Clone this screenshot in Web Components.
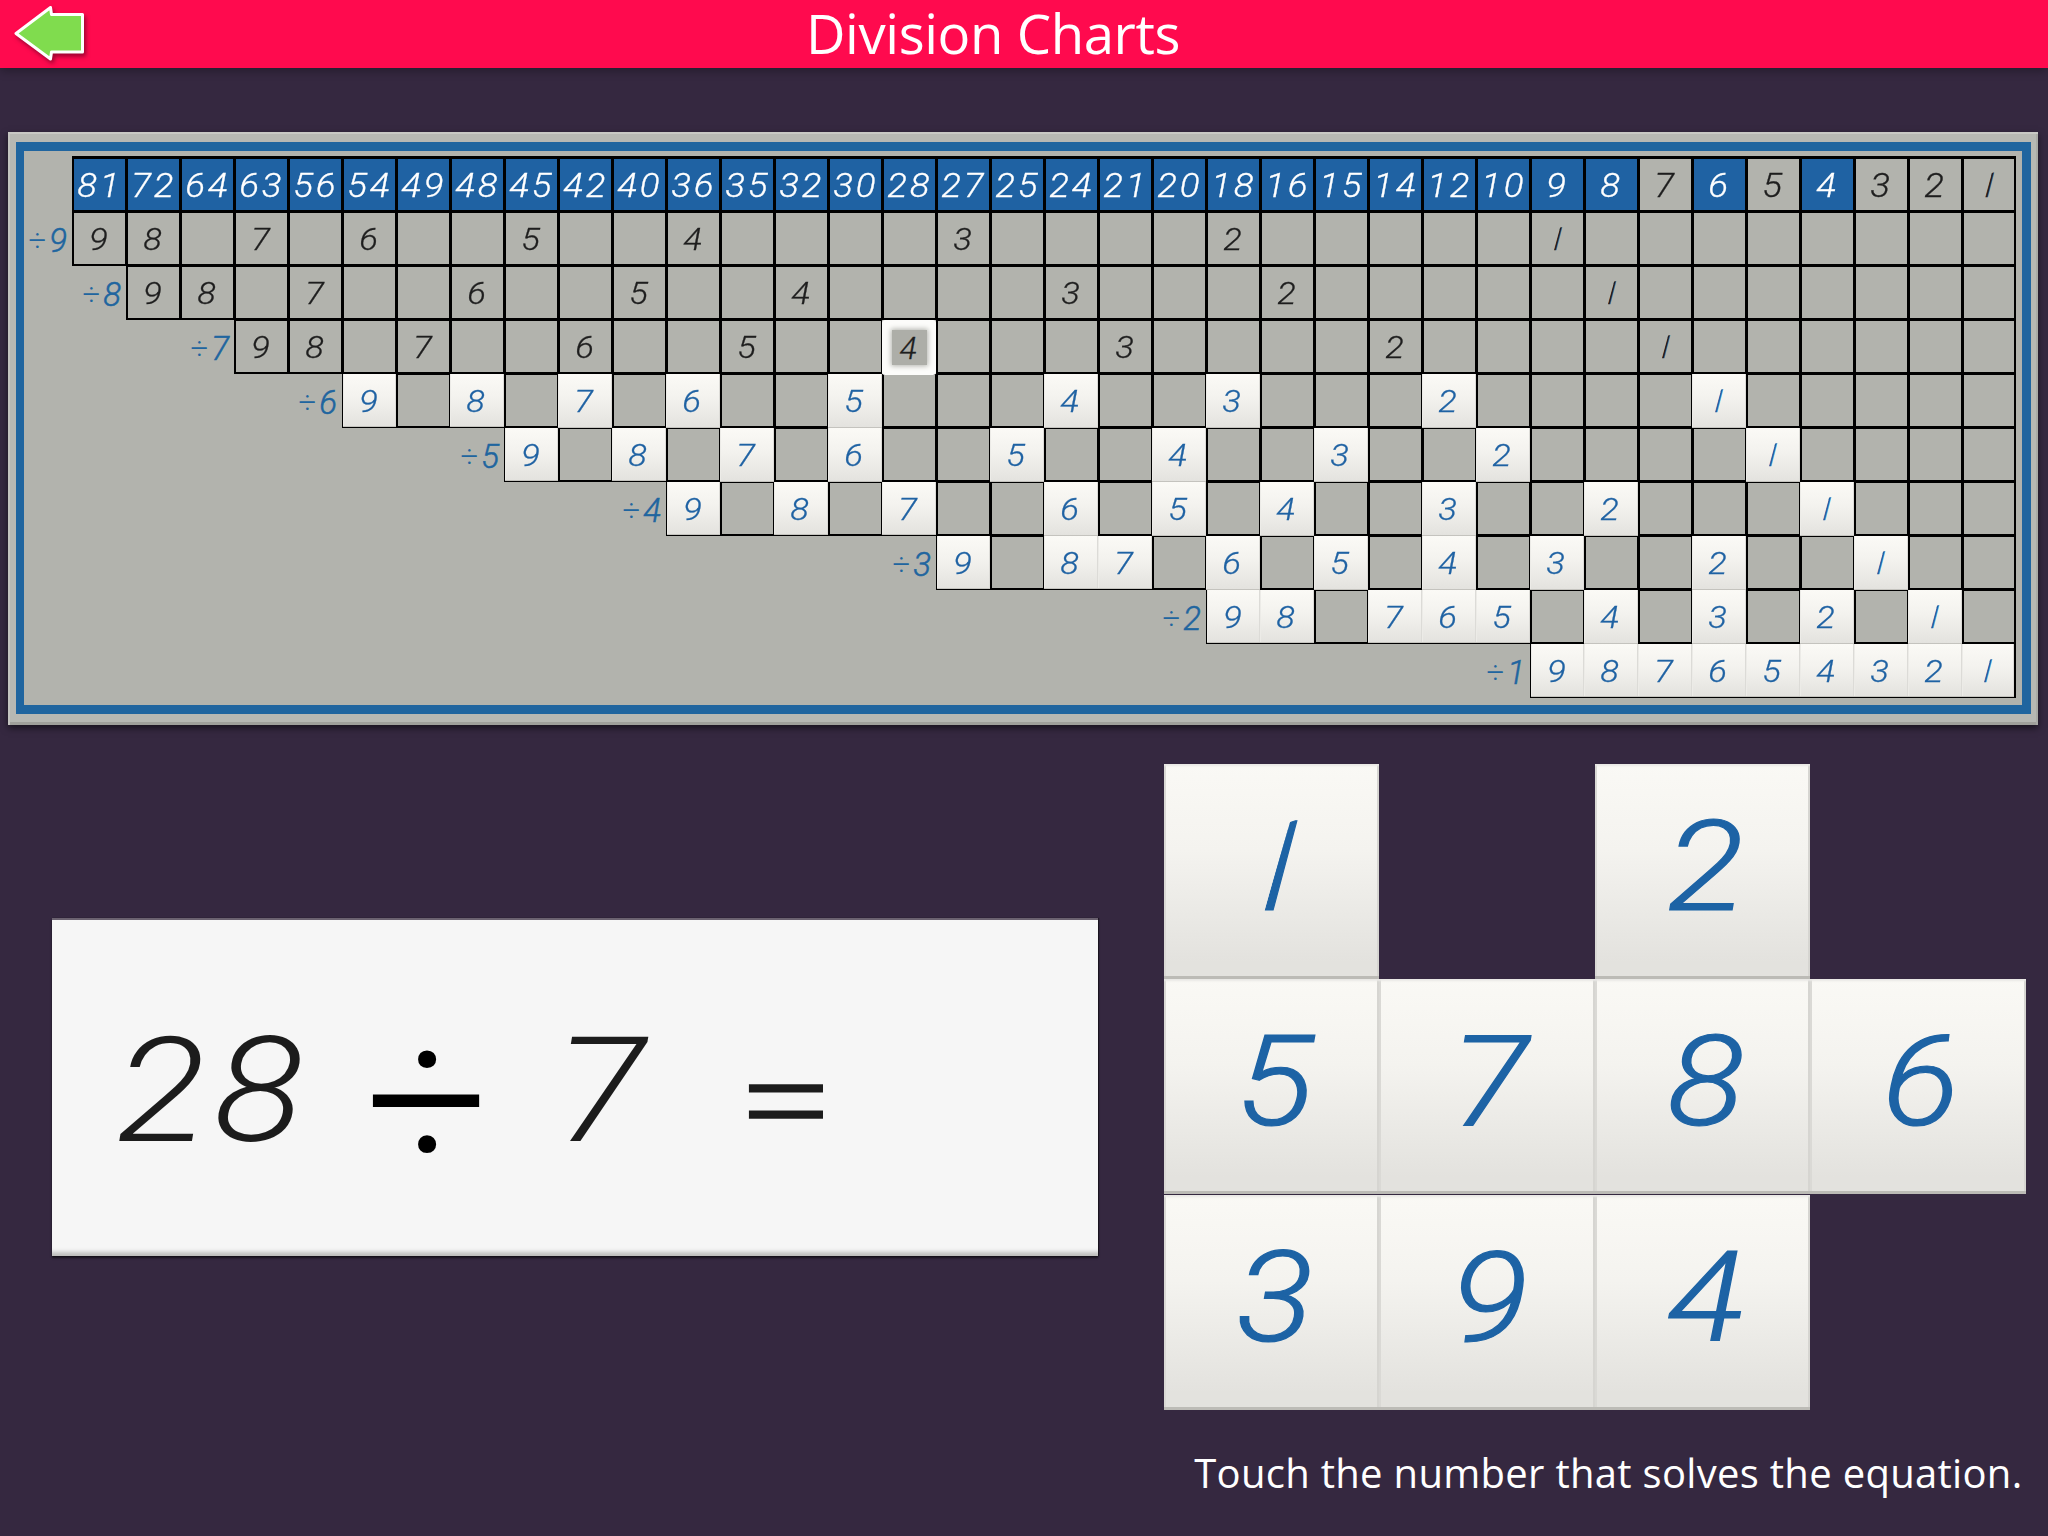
<!DOCTYPE html>
<html lang="en"><head><meta charset="utf-8"><title>Division Charts</title>
<style>
html,body{margin:0;padding:0;background:#352840}
body{width:2048px;height:1536px;overflow:hidden;font-family:"Open Sans",sans-serif}
</style></head><body>
<dc-app>
  <dc-header slot="header"><dc-back slot="start"></dc-back>Division Charts</dc-header>
  <dc-chart slot="chart"></dc-chart>
  <dc-equation slot="equation"><span slot="a">28</span><span slot="op">÷</span><span slot="b">7</span><span slot="eq">=</span></dc-equation>
  <dc-keypad slot="keypad" layout="1,,2,;5,7,8,6;3,9,4,">Touch the number that solves the equation.</dc-keypad>
</dc-app>
<script>
function def(name, css, html, init){
  const t=document.createElement('template');
  t.innerHTML='<style>'+css+'</style>'+html;
  customElements.define(name,class extends HTMLElement{
    constructor(){super();this.attachShadow({mode:'open'}).appendChild(t.content.cloneNode(true));}
    connectedCallback(){if(init&&!this._d){this._d=1;init.call(this);}}
  });
}
const HAND='Roboto,"Liberation Sans",sans-serif';
const ONE='clip-path:polygon(.375em 0,.9em 0,.9em 1em,.182em 1em);transform:skewX(-5deg);';
def('dc-app',`:host{display:block;width:2048px;height:1536px;background:#352840}
.main{padding:64px 10px 0 8px}
.low{display:flex;align-items:flex-start;padding:39px 0 0 52px}
.eq{display:block;margin-top:154px}
.kp{display:block;margin-left:65.5px}`,
`<slot name="header"></slot><div class="main"><slot name="chart"></slot></div>
<div class="low"><div class="eq"><slot name="equation"></slot></div><div class="kp"><slot name="keypad"></slot></div></div>`);

def('dc-header',`:host{display:flex;align-items:center;justify-content:center;position:relative;height:68px;background:#ff0a4e;color:#fff;
font:400 54.5px/66px "Open Sans",sans-serif;letter-spacing:-.4px;box-shadow:0 3px 9px rgba(0,0,0,.3);padding:0 62px 2px 0;box-sizing:border-box}
.s{position:absolute;left:14px;top:5px}`,
`<div class="s"><slot name="start"></slot></div><slot></slot>`);

def('dc-back',`:host{display:block;width:72px;height:58px}
svg{display:block;overflow:visible;filter:drop-shadow(2px 3px 2px rgba(90,0,30,.6))}`,
`<svg width="72" height="58" viewBox="14 5 72 58"><path d="M16 33.5 50.5 7.5 51.5 14.5 82.5 14.5 82.5 52 51.5 52 50.5 59Z" fill="#80dc4e" stroke="#fff" stroke-width="3" stroke-linejoin="round"/></svg>`);

def('dc-cell',`:host{display:flex;align-items:center;justify-content:center;box-sizing:border-box;border:solid #000;border-width:1px 1px 2px 2px;background:#b2b3ad;color:#1e1e1e;
font:italic 300 32px/1 ${HAND};-webkit-text-stroke:.3px currentColor;letter-spacing:2px;min-width:0;min-height:0;overflow:hidden}
.d{display:block;transform:scaleX(1.08)}
:host([one]) .d{${ONE}}
:host([kind=head]){background:#1f62a3;color:#fff;border-top-width:3px;font-size:34px;letter-spacing:2.4px}
:host([kind=headg]){border-top-width:3px;font-size:34px}
:host([kind=tile]){border:0 solid #000;background:linear-gradient(#fbfaf6,#f3f2ee 45%,#e3e2de);color:#1f62a3;box-shadow:inset 0 -1px #c4c3be,inset 1px 0 #eceBe7,inset -1px 0 #dcdbd7}
:host([edge~=l]){border-left-width:1px}
:host([edge~=b]){border-bottom-width:1px}
:host([edge~=r]){border-right-width:2px}
:host([last]){border-right-width:2px}
:host([kind=mark]){position:relative;z-index:2;border:0;background:#fcfcfa;border-radius:3px;margin:0 0 -1px 0;overflow:visible}
.m{display:none}
:host([kind=mark]) .m{display:flex;align-items:center;justify-content:center;width:35px;height:35px;background:#adaea8;box-shadow:0 0 5px 1px #b2b3ad}`,
`<span class="m"><slot name="in"></slot></span><span class="d"><slot></slot></span>`);

const vals=[81,72,64,63,56,54,49,48,45,42,40,36,35,32,30,28,27,25,24,21,20,18,16,15,14,12,10,9,8,7,6,5,4,3,2,1];
const greyHead=new Set([7,5,3,2,1]);
def('dc-chart',`:host{display:block;box-sizing:border-box;width:2030px;height:593px;padding:10px 7px 11px 8px;background:#b7b8b3;
box-shadow:0 3px 7px rgba(0,0,0,.55),inset 0 2px #c8c8c4,inset 2px 0 #c4c4c0,inset -2px 0 #a9aaa5,inset 0 -3px #a0a09b}
.f{box-sizing:border-box;height:100%;border:solid #20659f;border-width:9px 9px 9px 8px;background:#b2b3ad;padding:5px 6px 0 48px}
.g{display:grid;grid-template-columns:repeat(36,54px);grid-template-rows:56px repeat(9,54px);width:1944px}
.l{display:flex;align-items:center;justify-content:flex-end;color:#20659f;font:italic 300 33px/1 ${HAND};-webkit-text-stroke:.5px currentColor;padding:2px 5px 0 0;white-space:nowrap;z-index:1}
.l i{font-size:31px;font-weight:300;font-style:normal;margin-right:3px;-webkit-text-stroke:0}`,
`<div class="f"><div class="g"></div></div>`,
function(){
  const g=this.shadowRoot.querySelector('.g');
  const add=(c,r,kind,txt,edge)=>{
    const e=document.createElement('dc-cell');
    e.style.gridColumn=c+1;e.style.gridRow=r+1;
    if(kind)e.setAttribute('kind',kind);
    if(edge)e.setAttribute('edge',edge);
    if(c===35)e.setAttribute('last','');
    if(txt==='1')e.setAttribute('one','');
    if(kind==='mark'){const s=document.createElement('span');s.slot='in';s.textContent=txt;e.appendChild(s);}
    else if(txt!=='')e.textContent=txt;
    g.appendChild(e);
  };
  vals.forEach((v,c)=>add(c,0,greyHead.has(v)?'headg':'head',String(v)));
  for(let d=9;d>=1;d--){
    const r=10-d,start=vals.indexOf(9*d),next=d>1?vals.indexOf(9*(d-1)):99;
    const lab=document.createElement('div');lab.className='l';
    lab.style.gridRow=r+1;
    lab.innerHTML='<i>÷</i>'+d;
    if(start===0){lab.style.gridColumn='1';lab.style.marginLeft='-54px';lab.style.width='54px';lab.style.boxSizing='border-box'}
    else{lab.style.gridColumn=start;}
    g.appendChild(lab);
    vals.forEach((v,c)=>{
      if(c<start)return;
      const q=v%d===0?v/d:0,show=q>=1&&q<=9;
      const txt=show?String(q):'';
      if(d>=7){
        add(c,r,(d===7&&v===28)?'mark':'',txt);
      }else if(show){
        const ed=[];if(c===start)ed.push('l');if(c<next||d===1)ed.push('b');if(c===35)ed.push('r');
        add(c,r,'tile',txt,ed.join(' '));
      }else add(c,r,'',txt);
    });
  }
});

def('dc-equation',`:host{display:flex;align-items:center;box-sizing:border-box;width:1046px;height:338px;padding:8px 0 0 64px;background:#f6f6f6;color:#1c1c1c;
border-top:2px solid #6b6270;box-shadow:inset 0 -8px 4px -4px #bdbdbb,0 2px 2px rgba(0,0,0,.6),1px 0 1px rgba(0,0,0,.4)}
::slotted(span){display:block;line-height:1;font-family:${HAND}}
::slotted([slot=a]),::slotted([slot=b]){font-size:146px;font-style:italic;font-weight:300;transform:scaleX(1.15);transform-origin:0 50%}
::slotted([slot=a]){letter-spacing:6px}
::slotted([slot=op]){font-size:218px;font-weight:300;color:#000;margin:18px 0 0 80px}
::slotted([slot=b]){margin-left:66px}
::slotted([slot=eq]){font-size:130px;font-weight:300;-webkit-text-stroke:1.5px currentColor;margin:18px 0 0 116px;transform:scaleX(1.36)}`,
`<slot name="a"></slot><slot name="op"></slot><slot name="b"></slot><slot name="eq"></slot>`);

def('dc-tile',`:host{display:flex;align-items:center;justify-content:center;box-sizing:border-box;height:215px;padding-bottom:8px;
background:linear-gradient(#faf9f5,#f4f3ef 40%,#e3e2de 92%,#e3e2de);color:#1d63a5;font:italic 300 125px/1 ${HAND};-webkit-text-stroke:1.2px currentColor;
box-shadow:inset 0 4px 2px -2px #e9e8e5,inset 0 -3px #bcbbb6,inset 2px 0 #dad9d5,inset -2px 0 #d6d5d1}
.d{display:block;transform:translateX(3px) scaleX(1.15)}
:host([one]) .d{clip-path:polygon(.375em 0,.9em 0,.9em 1em,.182em 1em);transform:translateX(4px) skewX(-5deg) scaleX(1.05)}`,
`<span class="d"><slot></slot></span>`);

def('dc-keypad',`:host{display:block;width:862px}
.g{display:grid;grid-template-columns:repeat(4,215.5px);grid-template-rows:repeat(3,215.3px)}
.t{display:block;text-align:right;color:#fff;font:400 40px/56px "Open Sans",sans-serif;letter-spacing:.3px;padding:35px 3px 0 0;white-space:nowrap;margin-left:-60px}`,
`<div class="g"></div><div class="t"><slot></slot></div>`,
function(){
  const g=this.shadowRoot.querySelector('.g');
  this.getAttribute('layout').split(';').forEach((row,r)=>row.split(',').forEach((v,c)=>{
    if(!v)return;
    const t=document.createElement('dc-tile');t.textContent=v;
    if(v==='1')t.setAttribute('one','');
    t.style.gridColumn=c+1;t.style.gridRow=r+1;g.appendChild(t);
  }));
});
</script>
</body></html>
